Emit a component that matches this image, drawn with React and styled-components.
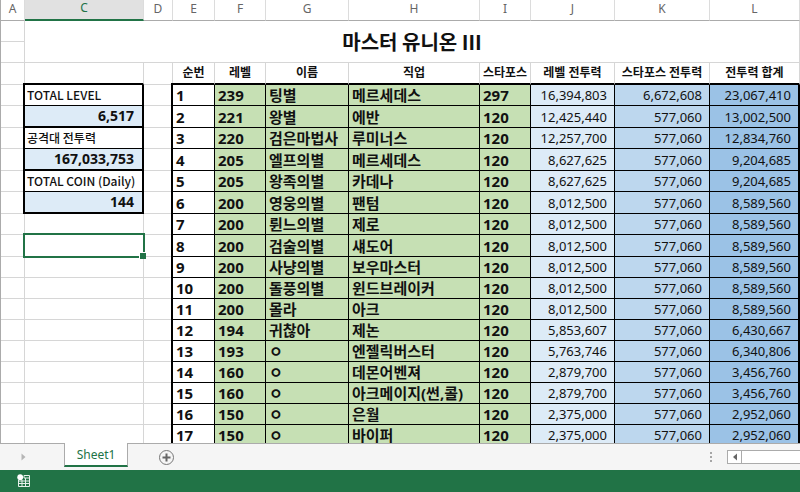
import React from "react";
import styled, { createGlobalStyle } from "styled-components";

const GlobalStyle = createGlobalStyle`
  * { box-sizing: border-box; }
  body { margin: 0; background: #fff; }
`;

const Window = styled.div`
  display: flex;
  flex-direction: column;
  height: 100vh;
  overflow: hidden;
  font-family: "Noto Sans", "Noto Sans CJK KR", sans-serif;
  color: #111;
`;

const SheetArea = styled.main`
  flex: 1;
  min-height: 0;
  overflow: hidden;
  border-left: 1px solid #ababab;
`;

const Grid = styled.table`
  width: 100%;
  table-layout: fixed;
  border-collapse: separate;
  border-spacing: 0;
`;

const Col = styled.col`
  width: ${(p) => (p.$w ? `${p.$w}px` : "auto")};
`;

const Row = styled.tr`
  height: ${(p) => p.$h || 21}px;
`;

const Letter = styled.th`
  padding: 0 0 3px;
  font-size: 12px;
  font-weight: 400;
  line-height: 14px;
  color: ${(p) => (p.$active ? "#217346" : "#666")};
  background: ${(p) => (p.$active ? "#e1e1e1" : "#fff")};
  border-right: 1px solid #dcdcdc;
  border-bottom: ${(p) => (p.$active ? "2px solid #217346" : "1px solid #ababab")};
`;

const Cell = styled.td`
  padding: 0;
  border-right: 1px solid #d6d6d6;
  border-bottom: 1px solid #d6d6d6;
`;

const SummaryTop = styled(Cell)`
  border-bottom: 2px solid #000;
`;

const Title = styled.th`
  padding: 0;
  font-family: "Noto Sans CJK KR", sans-serif;
  font-size: 20px;
  font-weight: 700;
  line-height: 28px;
  border-right: 1px solid #d6d6d6;
  border-bottom: 1px solid #d6d6d6;
`;

const Heading = styled.th`
  padding: 0;
  font-size: 12px;
  font-weight: 700;
  line-height: 18px;
  white-space: nowrap;
  border-right: 1px solid #d6d6d6;
  border-bottom: 2px solid #000;
`;

const leftEdge = (p) => {
  if (p.$edge === "corner") return "-2px 0 0 #000, -2px -2px 0 #000";
  return p.$edge ? "-2px 0 0 #000" : "none";
};

const SummaryLabel = styled.th`
  padding: 0 0 0 2px;
  font-family: "Noto Sans CJK KR", sans-serif;
  font-size: 12px;
  font-weight: 500;
  line-height: 16px;
  text-align: left;
  white-space: nowrap;
  background: #fff;
  border-right: 2px solid #000;
  border-bottom: 1px solid #000;
  box-shadow: ${leftEdge};
`;

const SummaryValue = styled.td`
  padding: 0 8px 0 0;
  font-size: 14px;
  font-weight: 700;
  line-height: 16px;
  text-align: right;
  background: #ddebf7;
  border-right: 2px solid #000;
  border-bottom: 2px solid #000;
  box-shadow: ${leftEdge};
`;

const SelectedCell = styled(Cell)`
  position: relative;
  &::before {
    content: "";
    position: absolute;
    inset: -2px;
    border: 2px solid #217346;
  }
  &::after {
    content: "";
    position: absolute;
    right: -3px;
    bottom: -3px;
    width: 6px;
    height: 6px;
    background: #217346;
    border: 1px solid #fff;
    border-width: 1px 0 0 1px;
  }
`;

const Data = styled.td`
  padding: 0 0 0 3px;
  font-size: 15px;
  font-weight: 700;
  line-height: 16px;
  white-space: nowrap;
  background: ${(p) => p.$bg || "#fff"};
  border-right: 1px solid #000;
  border-bottom: 1px solid #000;
  box-shadow: ${leftEdge};
`;

const Amount = styled(Data)`
  padding: 0 7px 0 0;
  font-size: 13px;
  font-weight: 400;
  text-align: right;
  border-right-width: ${(p) => (p.$last ? 2 : 1)}px;
`;

const TabBar = styled.nav`
  display: flex;
  align-items: stretch;
  height: 27px;
  background: #f5f5f5;
  border-top: 1px solid #ababab;
`;

const NavButton = styled.button`
  display: flex;
  align-items: center;
  width: 64px;
  padding: 0 0 0 21px;
  border: 0;
  background: none;
`;

const SheetTab = styled.button`
  width: 64px;
  height: 24px;
  margin-top: -1px;
  padding: 2px 0 0;
  font: 400 12px/20px "Noto Sans", sans-serif;
  color: #217346;
  background: #fff;
  border: 1px solid #ababab;
  border-width: 0 1px 2px;
  border-bottom-color: #217346;
`;

const AddButton = styled.button`
  display: flex;
  align-items: center;
  margin-left: 30px;
  padding: 0;
  border: 0;
  background: none;
`;

const Grip = styled.div`
  display: flex;
  flex-direction: column;
  justify-content: center;
  gap: 2px;
  margin-left: auto;
  margin-right: 15px;
`;

const Dot = styled.span`
  width: 2px;
  height: 2px;
  background: #a6a6a6;
`;

const ScrollBar = styled.div`
  display: flex;
  align-self: center;
  width: 73px;
  height: 14px;
  background: #fff;
  border: 1px solid #ababab;
  border-right: 0;
`;

const ScrollButton = styled.button`
  display: flex;
  align-items: center;
  justify-content: center;
  width: 14px;
  padding: 0;
  border: 0;
  border-right: 1px solid #ababab;
  background: #fff;
`;

const StatusBar = styled.footer`
  display: flex;
  align-items: center;
  height: 22px;
  padding-left: 17px;
  background: #217346;
`;

const columns = [
  ["A", 24], ["C", 119], ["D", 29], ["E", 42], ["F", 51], ["G", 83],
  ["H", 131], ["I", 51], ["J", 84], ["K", 95], ["L", 0],
];

const headings = ["순번", "레벨", "이름", "직업", "스타포스", "레벨 전투력", "스타포스 전투력", "전투력 합계"];

const members = [
  ["239", "팅별", "메르세데스", "297", "16,394,803", "6,672,608", "23,067,410"],
  ["221", "왕별", "에반", "120", "12,425,440", "577,060", "13,002,500"],
  ["220", "검은마법사", "루미너스", "120", "12,257,700", "577,060", "12,834,760"],
  ["205", "엘프의별", "메르세데스", "120", "8,627,625", "577,060", "9,204,685"],
  ["205", "왕족의별", "카데나", "120", "8,627,625", "577,060", "9,204,685"],
  ["200", "영웅의별", "팬텀", "120", "8,012,500", "577,060", "8,589,560"],
  ["200", "륀느의별", "제로", "120", "8,012,500", "577,060", "8,589,560"],
  ["200", "검술의별", "섀도어", "120", "8,012,500", "577,060", "8,589,560"],
  ["200", "사냥의별", "보우마스터", "120", "8,012,500", "577,060", "8,589,560"],
  ["200", "돌풍의별", "윈드브레이커", "120", "8,012,500", "577,060", "8,589,560"],
  ["200", "몰라", "아크", "120", "8,012,500", "577,060", "8,589,560"],
  ["194", "귀찮아", "제논", "120", "5,853,607", "577,060", "6,430,667"],
  ["193", "ㅇ", "엔젤릭버스터", "120", "5,763,746", "577,060", "6,340,806"],
  ["160", "ㅇ", "데몬어벤져", "120", "2,879,700", "577,060", "3,456,760"],
  ["160", "ㅇ", "아크메이지(썬,콜)", "120", "2,879,700", "577,060", "3,456,760"],
  ["150", "ㅇ", "은월", "120", "2,375,000", "577,060", "2,952,060"],
  ["150", "ㅇ", "바이퍼", "120", "2,375,000", "577,060", "2,952,060"],
];

const summary = ["TOTAL LEVEL", "6,517", "공격대 전투력", "167,033,753", "TOTAL COIN (Daily)", "144"];
const tallRows = [1, 3, 5, 7];
const selectedRow = 7;
const green = "#c6e0b4";

function SummaryCell({ index, edge }) {
  if (index === selectedRow) return <SelectedCell />;
  if (index >= summary.length) return <Cell />;
  return index % 2 === 0
    ? <SummaryLabel scope="row" $edge={edge}>{summary[index]}</SummaryLabel>
    : <SummaryValue $edge={edge}>{summary[index]}</SummaryValue>;
}

function MemberRow({ index, member }) {
  const [level, name, job, star, levelPower, starPower, total] = member;
  const edge = index === 0 ? "corner" : "side";
  return (
    <Row $h={tallRows.includes(index) ? 22 : 21}>
      <Cell />
      <SummaryCell index={index} edge={edge} />
      <Cell />
      <Data $edge={edge}>{index + 1}</Data>
      <Data $bg={green}>{level}</Data>
      <Data $bg={green}>{name}</Data>
      <Data $bg={green}>{job}</Data>
      <Data $bg={green}>{star}</Data>
      <Amount $bg="#ddebf7">{levelPower}</Amount>
      <Amount $bg="#bdd7ee">{starPower}</Amount>
      <Amount $bg="#9bc2e6" $last>{total}</Amount>
    </Row>
  );
}

export default function App() {
  return (
    <Window>
      <GlobalStyle />
      <SheetArea>
        <Grid>
          <colgroup>
            {columns.map(([name, w]) => <Col key={name} $w={w} />)}
          </colgroup>
          <thead>
            <Row>
              {columns.map(([name]) => (
                <Letter key={name} scope="col" $active={name === "C"}>{name}</Letter>
              ))}
            </Row>
          </thead>
          <tbody>
            <Row>
              <Cell />
              <Title colSpan={10} rowSpan={2}>마스터 유니온 Ⅲ</Title>
            </Row>
            <Row><Cell /></Row>
            <Row $h={22}>
              <Cell />
              <SummaryTop />
              <Cell />
              {headings.map((h) => <Heading key={h} scope="col">{h}</Heading>)}
            </Row>
            {members.map((m, i) => <MemberRow key={i} index={i} member={m} />)}
          </tbody>
        </Grid>
      </SheetArea>
      <TabBar>
        <NavButton aria-label="Next sheet">
          <svg width="5" height="8" viewBox="0 0 5 8"><path d="M0.5 0.5L4.5 4L0.5 7.5Z" fill="#b5b5b5" /></svg>
        </NavButton>
        <SheetTab>Sheet1</SheetTab>
        <AddButton aria-label="New sheet">
          <svg width="17" height="17" viewBox="0 0 17 17" fill="none">
            <circle cx="8.5" cy="8.5" r="7" stroke="#777" />
            <path d="M8.5 4.5V12.5M4.5 8.5H12.5" stroke="#666" strokeWidth="2" />
          </svg>
        </AddButton>
        <Grip><Dot /><Dot /><Dot /></Grip>
        <ScrollBar>
          <ScrollButton aria-label="Scroll left">
            <svg width="4" height="8" viewBox="0 0 4 8"><path d="M4 0.5V7.5L0 4Z" fill="#666" /></svg>
          </ScrollButton>
        </ScrollBar>
      </TabBar>
      <StatusBar>
        <svg width="14" height="14" viewBox="0 0 14 14">
          <path d="M7 1.5H12.5V4H7Z" fill="none" stroke="#e6f0ea" />
          <path d="M1.5 6V12.5H12.5V4" fill="none" stroke="#e6f0ea" />
          <path d="M2 7H12M2 9.5H12M5 6V12M8.5 4V12" stroke="#e6f0ea" />
          <circle cx="3.2" cy="3.2" r="2.9" fill="#fff" />
        </svg>
      </StatusBar>
    </Window>
  );
}
